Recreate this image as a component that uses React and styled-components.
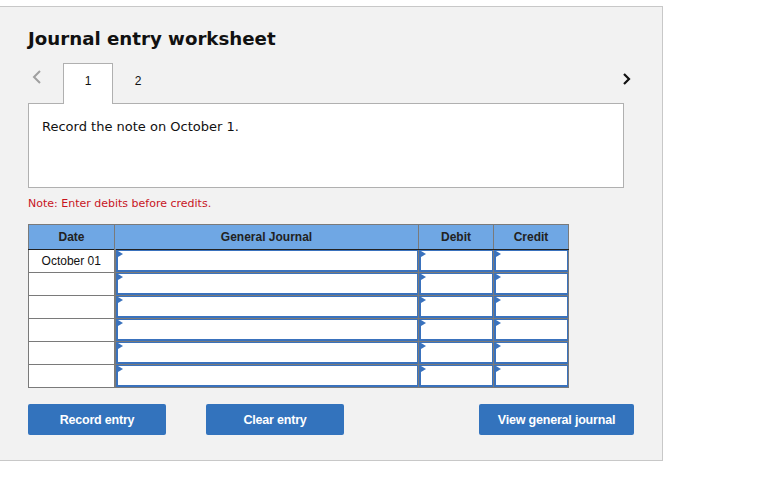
import styled, { createGlobalStyle } from "styled-components";

const GlobalStyle = createGlobalStyle`
  html, body {
    margin: 0;
    padding: 0;
    background: #fff;
  }
`;

const rows = [
  { date: "October 01" },
  { date: "" },
  { date: "" },
  { date: "" },
  { date: "" },
  { date: "" },
];

export default function App() {
  return (
    <>
      <GlobalStyle />
      <Panel>
        <Title>Journal entry worksheet</Title>
        <TabBar>
          <Chevron $dim>
            <svg width="10" height="16" viewBox="0 0 10 16">
              <polyline points="8,2 2,8 8,14" fill="none" stroke="#a0a0a0" strokeWidth="2" />
            </svg>
          </Chevron>
          <Tab $active>1</Tab>
          <Tab>2</Tab>
          <Spacer />
          <Chevron>
            <svg width="10" height="16" viewBox="0 0 10 16">
              <polyline points="2,3 7,8 2,13" fill="none" stroke="#111" strokeWidth="2.2" />
            </svg>
          </Chevron>
        </TabBar>
        <Prompt>Record the note on October 1.</Prompt>
        <Note>Note: Enter debits before credits.</Note>
        <Table>
          <colgroup>
            <col style={{ width: 86 }} />
            <col style={{ width: 304 }} />
            <col style={{ width: 75 }} />
            <col style={{ width: 75 }} />
          </colgroup>
          <thead>
            <tr>
              <Th>Date</Th>
              <Th>General Journal</Th>
              <Th>Debit</Th>
              <Th>Credit</Th>
            </tr>
          </thead>
          <tbody>
            {rows.map((r, i) => (
              <tr key={i}>
                <DateCell>{r.date}</DateCell>
                <InputCell><Field /></InputCell>
                <InputCell><Field /></InputCell>
                <InputCell><Field /></InputCell>
              </tr>
            ))}
          </tbody>
        </Table>
        <Actions>
          <Button $w={138}>Record entry</Button>
          <Button $w={138}>Clear entry</Button>
          <Button $w={155} $push>View general journal</Button>
        </Actions>
      </Panel>
    </>
  );
}

const Panel = styled.div`
  margin-top: 6px;
  margin-left: -1px;
  width: 634px;
  height: 453px;
  padding: 0 0 0 28px;
  background: #f2f2f2;
  border: 1px solid #c8c8c8;
  display: flex;
  flex-direction: column;
`

const Title = styled.h1`
  margin: 22px 0 0 0;
  font-family: "DejaVu Sans", Verdana, sans-serif;
  font-weight: bold;
  font-size: 18.2px;
  line-height: 20px;
  color: #111;
`

const TabBar = styled.div`
  margin-top: 14px;
  width: 604px;
  height: 40px;
  display: flex;
  align-items: stretch;
`

const Chevron = styled.div`
  width: 35px;
  display: flex;
  align-items: center;
  justify-content: ${p => (p.$dim ? "flex-start" : "flex-end")};
  padding-left: ${p => (p.$dim ? "4px" : "0")};
  padding-bottom: ${p => (p.$dim ? "12px" : "8px")};
  box-sizing: border-box;
`

const Spacer = styled.div`
  flex: 1;
`

const Tab = styled.div`
  width: 50px;
  box-sizing: border-box;
  display: flex;
  align-items: center;
  justify-content: center;
  padding-bottom: 6px;
  font-family: "Liberation Sans", Arial, sans-serif;
  font-size: 12px;
  color: #111;
  background: ${p => (p.$active ? "#fff" : "transparent")};
  border: 1px solid ${p => (p.$active ? "#b0b0b0" : "transparent")};
  border-bottom: none;
  margin-bottom: -1px;
  position: relative;
  z-index: 1;
`

const Prompt = styled.div`
  width: 596px;
  height: 85px;
  box-sizing: border-box;
  padding: 15px 13px;
  background: #fff;
  border: 1px solid #b0b0b0;
  font-family: "DejaVu Sans", Verdana, sans-serif;
  font-size: 13px;
  color: #111;
`

const Note = styled.div`
  margin-top: 9px;
  font-family: "DejaVu Sans", Verdana, sans-serif;
  font-size: 11px;
  line-height: 14px;
  color: #c8141e;
`

const Table = styled.table`
  margin-top: 13px;
  width: 540px;
  table-layout: fixed;
  border-collapse: collapse;
  border: 1px solid #7a7a7a;
  background: #fff;
`

const Th = styled.th`
  height: 24px;
  padding: 0;
  background: #6fa7e4;
  border: 1px solid #7a7a7a;
  border-left: 1px solid #222;
  border-bottom: 1px solid #222;
  font-family: "Liberation Sans", Arial, sans-serif;
  font-size: 12px;
  font-weight: bold;
  color: #222;
  text-align: center;
  &:first-child {
    border-left-color: #7a7a7a;
  }
`

const DateCell = styled.td`
  height: 22px;
  padding: 0;
  border: 1px solid #7a7a7a;
  border-right: 2px solid #7a7a7a;
  font-family: "Liberation Sans", Arial, sans-serif;
  font-size: 12px;
  color: #111;
  text-align: center;
`

const InputCell = styled.td`
  height: 22px;
  padding: 0;
  border: 1px solid #7a7a7a;
`

const Field = styled.div`
  height: 22px;
  box-sizing: border-box;
  border: 1px solid #3a72bd;
  border-left-width: 2px;
  border-bottom-width: 2px;
  background: #fff;
  position: relative;
  &::before {
    content: "";
    position: absolute;
    left: 0;
    top: 0;
    border-left: 5px solid #3a72bd;
    border-top: 3px solid transparent;
    border-bottom: 3px solid transparent;
  }
`

const Actions = styled.div`
  margin-top: 16px;
  width: 606px;
  display: flex;
  gap: 40px;
`

const Button = styled.button`
  width: ${p => p.$w}px;
  height: 31px;
  margin-left: ${p => (p.$push ? "auto" : "0")};
  border: none;
  border-radius: 2px;
  background: #3373bd;
  color: #fff;
  font-family: "Liberation Sans", Arial, sans-serif;
  font-weight: bold;
  font-size: 12.5px;
  letter-spacing: -0.2px;
  cursor: pointer;
`
